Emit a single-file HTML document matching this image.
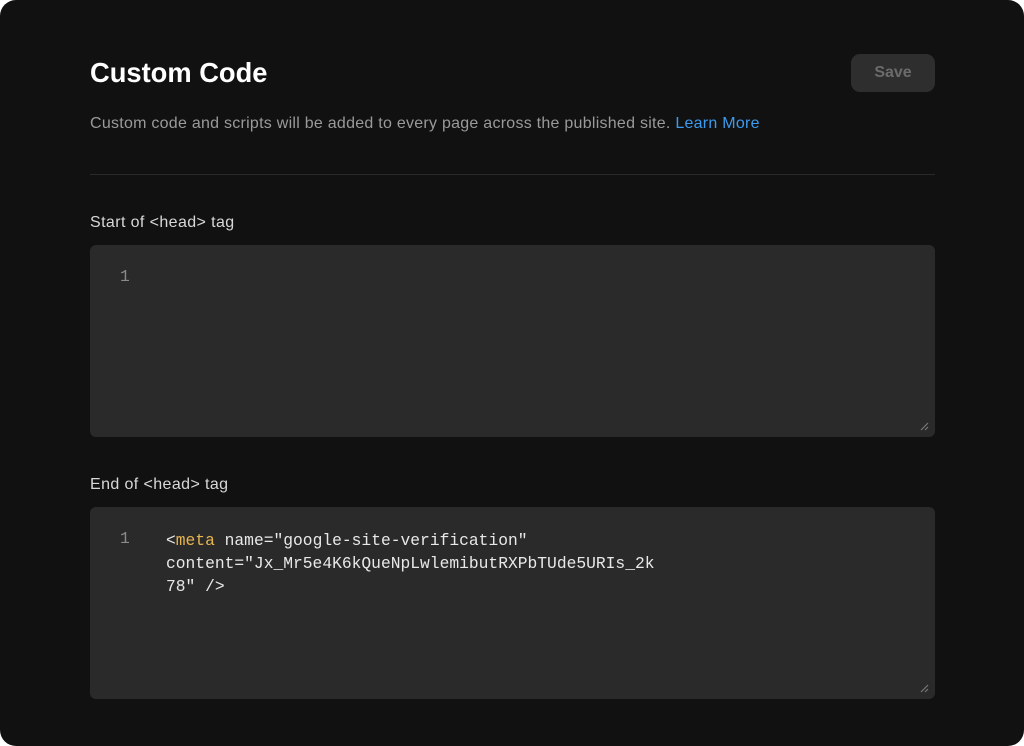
<!DOCTYPE html>
<html><head><meta charset="utf-8"><style>
html,body{margin:0;padding:0;background:#fff;}
body{width:1024px;height:746px;overflow:hidden;font-family:"Liberation Sans",sans-serif;}
.card{position:absolute;left:0;top:0;width:1024px;height:746px;background:#111111;border-radius:16px;}
h1{position:absolute;left:90px;top:57px;margin:0;font-size:27.3px;font-weight:700;color:#fff;letter-spacing:0;}
.save{position:absolute;left:851px;top:54px;width:84px;height:38px;background:#2e2e2e;border-radius:9px;color:#6b6b6b;font-weight:700;font-size:16px;line-height:38px;text-align:center;}
.desc{position:absolute;left:90px;top:115px;font-size:16px;letter-spacing:0.26px;color:#9a9a9a;}
.desc a{color:#3b9bf0;text-decoration:none;}
.hr{position:absolute;left:90px;top:174px;width:845px;height:1px;background:#2a2a2a;}
.label{position:absolute;left:90px;font-size:16px;letter-spacing:0.4px;color:#d8d8d8;}
.box{position:absolute;left:90px;width:845px;height:192px;background:#2a2a2a;border-radius:6px;font-family:"Liberation Mono",monospace;font-size:16.3px;color:#e8e8e8;}
.ln{position:absolute;left:30px;top:22px;color:#8a8a8a;}
.code{position:absolute;left:76px;top:22px;line-height:23px;white-space:pre;}
.kw{color:#e6b450;}
.grip{position:absolute;right:6px;bottom:6px;}
</style></head><body>
<div class="card">
<h1>Custom Code</h1>
<div class="save">Save</div>
<div class="desc">Custom code and scripts will be added to every page across the published site. <a>Learn More</a></div>
<div class="hr"></div>
<div class="label" style="top:214px">Start of &lt;head&gt; tag</div>
<div class="box" style="top:245px"><div class="ln">1</div>
<svg class="grip" width="10" height="10"><path d="M2 9L9 2M6 9L9 6" stroke="#777" stroke-width="1.2"/></svg></div>
<div class="label" style="top:476px">End of &lt;head&gt; tag</div>
<div class="box" style="top:507px"><div class="ln">1</div>
<div class="code">&lt;<span class="kw">meta</span> name="google-site-verification"
content="Jx_Mr5e4K6kQueNpLwlemibutRXPbTUde5URIs_2k
78" /&gt;</div>
<svg class="grip" width="10" height="10"><path d="M2 9L9 2M6 9L9 6" stroke="#777" stroke-width="1.2"/></svg></div>
</div>
</body></html>
